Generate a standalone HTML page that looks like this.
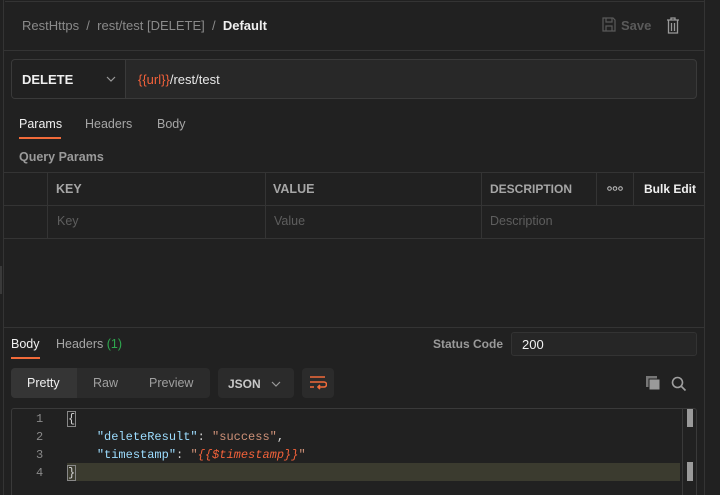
<!DOCTYPE html>
<html><head><meta charset="utf-8"><style>
*{margin:0;padding:0;box-sizing:border-box}
body{width:720px;height:495px;background:#212121;font-family:"Liberation Sans",sans-serif;font-size:12.5px;color:#a6a6a6;position:relative;overflow:hidden}
.a{position:absolute}
.hl{position:absolute;height:1px;background:#343434}
.vl{position:absolute;width:1px;background:#343434}
.mono{font-family:"Liberation Mono",monospace;font-size:12px}
</style></head><body>
<div class="vl" style="left:3px;top:0;height:495px"></div>
<div class="vl" style="left:704px;top:0;height:495px"></div>
<div class="hl" style="left:5px;top:1px;width:284px"></div>
<div class="hl" style="left:289px;top:1px;width:415px"></div>
<div class="hl" style="left:3px;top:50px;width:701px"></div>

<div class="a" style="left:22px;top:18px;color:#8a8a8a;font-size:13px">RestHttps &nbsp;/&nbsp; rest/test [DELETE] &nbsp;/&nbsp; <b style="color:#f0f0f0">Default</b></div>
<svg class="a" style="left:602px;top:17px" width="14" height="15" viewBox="0 0 14 15" fill="none" stroke="#5a5a5a" stroke-width="1.2"><path d="M1 1h10l2 2v11H1z M4 1v4h6V1 M4 14V9h6v5"/></svg>
<div class="a" style="left:621px;top:18px;color:#5a5a5a;font-weight:bold;font-size:13px">Save</div>
<svg class="a" style="left:666px;top:17px" width="14" height="17" viewBox="0 0 14 17" fill="none" stroke="#9a9a9a" stroke-width="1.3"><path d="M1 3h12 M5 3V1h4v2 M2.5 3v13h9V3 M5.5 6v8 M8.5 6v8"/></svg>

<div class="a" style="left:11px;top:59px;width:686px;height:40px;border:1px solid #3a3a3a;border-radius:4px;background:#282828"></div>
<div class="a" style="left:12px;top:60px;width:114px;height:38px;background:#212121;border-right:1px solid #3a3a3a;border-radius:3px 0 0 3px"></div>
<div class="a" style="left:22px;top:72px;color:#f0f0f0;font-weight:bold;font-size:13px">DELETE</div>
<svg class="a" style="left:106px;top:76px" width="10" height="6" viewBox="0 0 10 6" fill="none" stroke="#9a9a9a" stroke-width="1.2"><path d="M1 1l4 4 4-4"/></svg>
<div class="a" style="left:138px;top:72px;font-size:13px;color:#e8e8e8"><span style="color:#f2613a">{{url}}</span>/rest/test</div>

<div class="a" style="left:19px;top:117px;color:#f0f0f0">Params</div>
<div class="a" style="left:19px;top:137px;width:42px;height:2px;background:#f26b3a"></div>
<div class="a" style="left:85px;top:117px">Headers</div>
<div class="a" style="left:157px;top:117px">Body</div>
<div class="a" style="left:19px;top:150px;font-weight:bold;color:#9a9a9a">Query Params</div>

<div class="hl" style="left:3px;top:172px;width:701px"></div>
<div class="hl" style="left:3px;top:205px;width:701px"></div>
<div class="hl" style="left:3px;top:238px;width:701px"></div>
<div class="vl" style="left:47px;top:172px;height:66px"></div>
<div class="vl" style="left:265px;top:172px;height:66px"></div>
<div class="vl" style="left:481px;top:172px;height:66px"></div>
<div class="vl" style="left:596px;top:172px;height:33px"></div>
<div class="vl" style="left:633px;top:172px;height:33px"></div>
<div class="a" style="left:56px;top:182px;font-weight:bold;color:#a6a6a6">KEY</div>
<div class="a" style="left:273px;top:182px;font-weight:bold;color:#a6a6a6">VALUE</div>
<div class="a" style="left:490px;top:182px;font-weight:bold;color:#a6a6a6;font-size:12px">DESCRIPTION</div>
<svg class="a" style="left:607px;top:186px" width="16" height="5" viewBox="0 0 16 5" fill="none" stroke="#c0c0c0" stroke-width="1"><circle cx="2.5" cy="2.5" r="1.8"/><circle cx="8" cy="2.5" r="1.8"/><circle cx="13.5" cy="2.5" r="1.8"/></svg>
<div class="a" style="left:644px;top:182px;font-weight:bold;color:#f0f0f0;font-size:12px">Bulk Edit</div>
<div class="a" style="left:57px;top:214px;color:#5e5e5e">Key</div>
<div class="a" style="left:274px;top:214px;color:#5e5e5e">Value</div>
<div class="a" style="left:490px;top:214px;color:#5e5e5e">Description</div>
<div class="a" style="left:0;top:266px;width:2px;height:28px;background:#3a3a3a"></div>

<div class="hl" style="left:3px;top:327px;width:701px"></div>
<div class="a" style="left:11px;top:337px;color:#f0f0f0">Body</div>
<div class="a" style="left:11px;top:357px;width:29px;height:2px;background:#f26b3a"></div>
<div class="a" style="left:56px;top:337px">Headers <span style="color:#2fa84f">(1)</span></div>
<div class="a" style="left:433px;top:337px;font-weight:bold;font-size:12px;color:#9a9a9a">Status Code</div>
<div class="a" style="left:511px;top:332px;width:186px;height:24px;border:1px solid #333;border-radius:3px;background:#262626"></div>
<div class="a" style="left:522px;top:337px;color:#f0f0f0;font-size:13px">200</div>

<div class="a" style="left:11px;top:368px;width:199px;height:30px;background:#2b2b2b;border-radius:4px"></div>
<div class="a" style="left:11px;top:368px;width:66px;height:30px;background:#353535;border-radius:4px 0 0 4px"></div>
<div class="a" style="left:27px;top:376px;color:#f0f0f0">Pretty</div>
<div class="a" style="left:93px;top:376px;color:#a0a0a0">Raw</div>
<div class="a" style="left:149px;top:376px;color:#a0a0a0">Preview</div>
<div class="a" style="left:218px;top:368px;width:76px;height:30px;background:#2b2b2b;border-radius:4px"></div>
<div class="a" style="left:228px;top:377px;font-weight:bold;font-size:12px;color:#c8c8c8">JSON</div>
<svg class="a" style="left:271px;top:381px" width="10" height="6" viewBox="0 0 10 6" fill="none" stroke="#9a9a9a" stroke-width="1.2"><path d="M1 1l4 4 4-4"/></svg>
<div class="a" style="left:302px;top:368px;width:32px;height:30px;background:#2b2b2b;border-radius:4px"></div>
<svg class="a" style="left:309px;top:375px" width="18" height="16" viewBox="0 0 18 16" fill="none" stroke="#f26b3a" stroke-width="1.6"><path d="M1 2h15 M1 7h14a2.5 2.5 0 0 1 0 5H9 M11 10l-2 2 2 2 M1 12h4"/></svg>
<svg class="a" style="left:646px;top:376px" width="16" height="15" viewBox="0 0 16 15"><rect x="0" y="0" width="11" height="11" fill="#777"/><rect x="3" y="3" width="11" height="11" fill="#9a9a9a" stroke="#212121" stroke-width="1"/></svg>
<svg class="a" style="left:671px;top:376px" width="16" height="16" viewBox="0 0 16 16" fill="none" stroke="#a0a0a0" stroke-width="1.6"><circle cx="6.5" cy="6.5" r="5"/><path d="M10.5 10.5l4 4"/></svg>

<div class="a" style="left:11px;top:408px;width:686px;height:87px;border:1px solid #3a3a3a;border-bottom:none;border-radius:3px 3px 0 0;background:#212121"></div>
<div class="a" style="left:67px;top:463px;width:613px;height:18px;background:#3b3b2f"></div>
<div class="vl" style="left:682px;top:409px;height:86px;background:#3a3a3a"></div>
<div class="a" style="left:687px;top:409px;width:6px;height:18px;background:#9a9a9a"></div>
<div class="a" style="left:687px;top:462px;width:6px;height:19px;background:#9a9a9a"></div>
<div class="a mono" style="left:36px;top:410px;line-height:18px;color:#8a8a8a">1<br>2<br>3<br>4</div>
<div class="a mono" style="left:68px;top:410px;line-height:18px;color:#d4d4d4;white-space:pre"><span style="outline:1px solid #888">{</span>
    <span style="color:#9cdcfe">"deleteResult"</span>: <span style="color:#ce9178">"success"</span>,
    <span style="color:#9cdcfe">"timestamp"</span>: <span style="color:#ce9178">"</span><i style="color:#f2613a">{{$timestamp}}</i><span style="color:#ce9178">"</span>
<span style="outline:1px solid #888">}</span></div>
</body></html>
